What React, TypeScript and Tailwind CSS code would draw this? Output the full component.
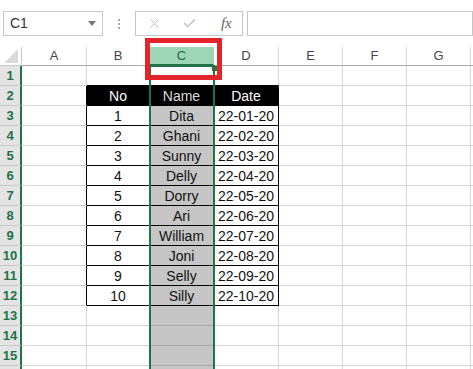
import React from 'react';
import { X, Check } from 'lucide-react';

const cols = [
  { k: 'A', w: 'w-[65px]' },
  { k: 'B', w: 'w-[63px]' },
  { k: 'C', w: 'w-[64px]' },
  { k: 'D', w: 'w-[65px]' },
  { k: 'E', w: 'w-[64px]' },
  { k: 'F', w: 'w-[64px]' },
  { k: 'G', w: 'w-[64px]' },
  { k: 'H', w: 'w-[64px]' },
];

const people = [
  ['1', 'Dita', '22-01-20'],
  ['2', 'Ghani', '22-02-20'],
  ['3', 'Sunny', '22-03-20'],
  ['4', 'Delly', '22-04-20'],
  ['5', 'Dorry', '22-05-20'],
  ['6', 'Ari', '22-06-20'],
  ['7', 'William', '22-07-20'],
  ['8', 'Joni', '22-08-20'],
  ['9', 'Selly', '22-09-20'],
  ['10', 'Silly', '22-10-20'],
];

const rows = Array.from({ length: 16 }, (_, i) => i + 1);

function cellText(row: number, col: string) {
  if (row === 2) {
    if (col === 'B') return 'No';
    if (col === 'C') return 'Name';
    if (col === 'D') return 'Date';
  }
  if (row >= 3 && row <= 12) {
    const p = people[row - 3];
    if (col === 'B') return p[0];
    if (col === 'C') return p[1];
    if (col === 'D') return p[2];
  }
  return '';
}

function cellClass(row: number, col: string) {
  const inTable = row >= 2 && row <= 12 && (col === 'B' || col === 'C' || col === 'D');
  const above = row === 1 && (col === 'B' || col === 'C' || col === 'D');
  let bg = 'bg-white';
  let text = 'text-[#111]';
  if (col === 'C' && row >= 3) bg = 'bg-[#c6c6c6]';
  if (row === 2 && inTable) {
    bg = 'bg-black';
    text = col === 'C' ? 'text-[#dcdcdc]' : 'text-white';
  }
  let br = 'border-r-[#d4d4d4]';
  let bb = 'border-b-[#d4d4d4]';
  if (inTable) {
    br = 'border-r-black';
    bb = 'border-b-black';
  }
  if (above) bb = 'border-b-black';
  if (col === 'A' && row >= 2 && row <= 12) br = 'border-r-black';
  if (col === 'C' && row > 12) {
    bb = 'border-b-[#a8a8a8]';
    br = 'border-r-[#a8a8a8]';
  }
  return `${bg} ${text} ${br} ${bb}`;
}

export default function App() {
  return (
    <div className="relative w-[473px] h-[369px] overflow-hidden bg-white font-['Liberation_Sans',sans-serif]">
      {/* formula bar */}
      <div className="h-[47px] flex items-start pt-[11px] pl-[3px]">
        <div className="w-[100px] h-[25px] border border-[#c6c6c6] flex items-center justify-between pl-[6px] pr-[6px]">
          <span className="text-[14px] text-[#333]">C1</span>
          <svg width="8" height="5" viewBox="0 0 8 5">
            <polygon points="0,0 8,0 4,5" fill="#777" />
          </svg>
        </div>
        <div className="w-[32px] h-[25px] flex flex-col items-center justify-center gap-[2px]">
          <span className="w-[2px] h-[2px] bg-[#aaa]" />
          <span className="w-[2px] h-[2px] bg-[#aaa]" />
          <span className="w-[2px] h-[2px] bg-[#aaa]" />
        </div>
        <div className="w-[108px] h-[25px] border border-[#c6c6c6] flex items-center">
          <div className="w-[36px] flex justify-center pl-[2px]">
            <X size={15} strokeWidth={1.4} color="#b8b8b8" />
          </div>
          <div className="w-[36px] flex justify-center pl-[2px]">
            <Check size={15} strokeWidth={2} color="#b8b8b8" />
          </div>
          <div className="w-[36px] flex justify-center pl-[4px]">
            <span className="italic text-[15px] text-[#666] font-['Liberation_Serif',serif]">fx</span>
          </div>
        </div>
        <div className="ml-[4px] flex-1 h-[25px] border border-[#c6c6c6]" />
      </div>

      {/* column headers */}
      <div className="flex h-[19px]">
        <div className="w-[22px] shrink-0 border-r border-b border-[#c8c8c8] bg-white flex items-end justify-end pr-[3px] pb-[2px]">
          <svg width="14" height="14" viewBox="0 0 14 14">
            <polygon points="14,0 14,14 0,14" fill="#dadada" />
          </svg>
        </div>
        {cols.map(c => (
          <div
            key={c.k}
            className={`${c.w} shrink-0 flex items-center justify-center text-[13px] ${
              c.k === 'C'
                ? 'bg-[#9fd5b7] text-[#1e6b3e] border-r border-r-[#9fd5b7] border-b-2 border-b-[#217346]'
                : 'bg-white text-[#444] border-r border-r-[#d4d4d4] border-b border-b-[#ababab]'
            }`}
          >
            {c.k === 'H' ? '' : c.k}
          </div>
        ))}
      </div>

      {/* rows */}
      {rows.map(r => (
        <div key={r} className="flex h-[20px]">
          <div className="w-[22px] shrink-0 bg-[#e4e4e4] border-b border-b-[#c8c8c8] border-r-2 border-r-[#217346] flex items-center justify-center text-[13px] font-bold text-[#217346]">
            {r < 16 ? r : ''}
          </div>
          {cols.map(c => (
            <div
              key={c.k}
              className={`${c.w} shrink-0 border-r border-b flex items-center justify-center text-[14px] leading-none ${cellClass(r, c.k)}`}
            >
              {cellText(r, c.k)}
            </div>
          ))}
        </div>
      ))}

      {/* column C selection */}
      <div className="absolute left-[149px] top-[65px] w-[66px] bottom-0 border-x-2 border-t-2 border-[#217346]" />
      <div className="absolute left-[212px] top-[66px] w-[5px] h-[5px] bg-[#217346]" />

      {/* annotation */}
      <div className="absolute left-[145px] top-[38px] w-[77px] h-[42px] border-[5px] border-[#e3242b]" />
    </div>
  );
}
